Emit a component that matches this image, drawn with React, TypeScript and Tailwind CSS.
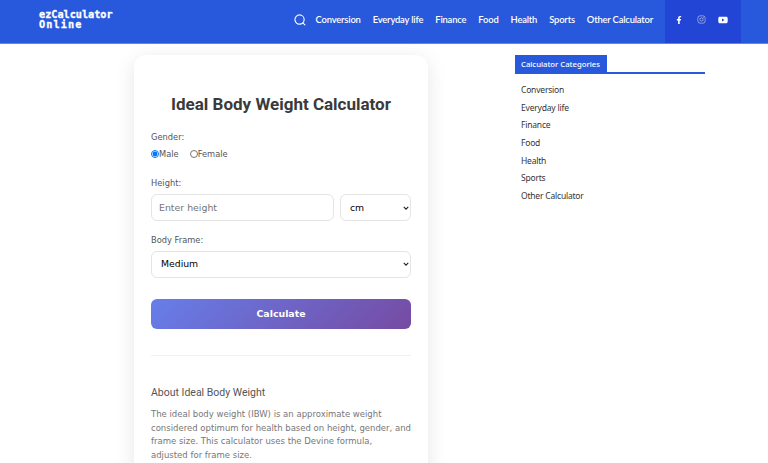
import { FaFacebookF, FaInstagram, FaYoutube } from "react-icons/fa";

const navItems = ["Conversion", "Everyday life", "Finance", "Food", "Health", "Sports", "Other Calculator"];

const Chevron = () => (
  <svg viewBox="0 0 8 5" className="absolute right-[2px] top-1/2 -translate-y-1/2 w-[6px] h-[4px] pointer-events-none text-[#222]">
    <path d="M1 1l3 3 3-3" fill="none" stroke="currentColor" strokeWidth="1.5" />
  </svg>
);

const Header = () => {
  return (
    <header className="h-[44px] bg-[#2859dc] border-b border-[#5d86ea] flex items-center pl-[39px] pr-[27px]">
      <a className="block font-['DejaVu_Sans_Mono',monospace] font-bold text-[10.2px] leading-[10px] text-white w-[120px] pb-[3px] [-webkit-text-stroke:0.3px_white]">
        ezCalculator<br /><span className="tracking-[1.1px]">Online</span>
      </a>
      <nav className="ml-auto flex items-center h-full font-['Lato',sans-serif] font-semibold text-[9.4px] tracking-[-0.17px] text-white">
        <svg viewBox="0 0 13 13" className="w-[12px] h-[12px] mr-[10px] mb-[4px]" fill="none" stroke="currentColor" strokeWidth="1.2">
          <circle cx="6" cy="6" r="5" />
          <path d="M9.6 9.6l2.2 2.2" strokeLinecap="round" />
        </svg>
        <div className="flex gap-3 pb-[3px]">
          {navItems.map((item) => (
            <a key={item}>{item}</a>
          ))}
        </div>
        <div className="ml-3 w-[76px] h-full bg-[#2245d6] flex items-center pl-[3px] pb-[4px]">
          <span className="w-[22px] flex justify-center"><FaFacebookF size={8} /></span>
          <span className="w-[22px] flex justify-center"><FaInstagram size={9} className="opacity-60" /></span>
          <span className="w-[22px] flex justify-center"><FaYoutube size={10} /></span>
        </div>
      </nav>
    </header>
  );
};

const Calculator = () => {
  return (
    <div className="w-[294px] bg-white rounded-xl shadow-[0_4px_20px_rgba(0,0,0,0.1)] px-[17px] pt-[39px] pb-8 font-['DejaVu_Sans',sans-serif]">
      <h1 className="font-['Roboto',sans-serif] font-bold text-[17px] leading-[20px] text-[#3a3a3a] text-center mb-[16px]">
        Ideal Body Weight Calculator
      </h1>

      <div className="text-[8.3px] text-[#555] mb-[15px]">
        <label className="block leading-[14px] mb-[3px]">Gender:</label>
        <div className="flex items-center gap-[11px] h-[14px]">
          <label className="flex items-center">
            <input type="radio" name="gender" defaultChecked className="m-0 w-[8px] h-[8px]" />
            Male
          </label>
          <label className="flex items-center">
            <input type="radio" name="gender" className="m-0 w-[8px] h-[8px]" />
            Female
          </label>
        </div>
      </div>

      <div className="mb-[12px]">
        <label className="block text-[8.3px] leading-[14px] text-[#555] mb-[4px]">Height:</label>
        <div className="flex gap-[6px]">
          <input
            placeholder="Enter height"
            className="w-[183px] h-[27px] px-[7px] border border-[#e4e4e4] rounded-md text-[9.4px] text-black placeholder:text-[#757575]"
          />
          <div className="relative w-[71px]">
            <select className="appearance-none w-full h-[27px] pl-[9px] border border-[#e4e4e4] rounded-md bg-white text-[9.3px] text-black">
              <option>cm</option>
              <option>in</option>
            </select>
            <Chevron />
          </div>
        </div>
      </div>

      <div className="mb-[21px]">
        <label className="block text-[8.3px] leading-[14px] text-[#555] mb-[3px]">Body Frame:</label>
        <div className="relative">
          <select className="appearance-none w-full h-[27px] pl-[9px] border border-[#e4e4e4] rounded-md bg-white text-[9.3px] text-black">
            <option>Medium</option>
            <option>Small</option>
            <option>Large</option>
          </select>
          <Chevron />
        </div>
      </div>

      <button className="w-full h-[30px] rounded-md bg-[linear-gradient(135deg,#667eea,#764ba2)] text-white font-bold text-[9.4px]">
        Calculate
      </button>

      <div className="border-t border-[#f0f0f0] mt-[26px] pt-[29px]">
        <h2 className="font-['Roboto',sans-serif] text-[10.5px] leading-[16px] text-[#555] mb-[7px]">About Ideal Body Weight</h2>
        <p className="text-[8.5px] leading-[13.6px] text-[#777] -mr-[1px]">
          The ideal body weight (IBW) is an approximate weight considered optimum for health based on height, gender, and frame size. This calculator uses the Devine formula,<br />adjusted for frame size.
        </p>
      </div>
    </div>
  );
};

const Sidebar = () => {
  return (
    <aside className="w-[190px] font-['Noto_Sans',sans-serif]">
      <div className="border-b-2 border-[#2859dc]">
        <div className="w-[92px] h-[17px] bg-[#2859dc] text-white text-[7.7px] font-medium leading-[18px] pl-[6px] whitespace-nowrap">
          Calculator Categories
        </div>
      </div>
      <ul className="mt-[7px] pl-[6px] text-[8.5px] tracking-[-0.2px] text-[#333]">
        {navItems.map((item) => (
          <li key={item} className="h-[17.7px] leading-[17.7px]">{item}</li>
        ))}
      </ul>
    </aside>
  );
};

export default function App() {
  return (
    <div className="h-[463px] overflow-hidden bg-white">
      <Header />
      <main className="flex pt-[11px] pl-[134px] gap-[87px]">
        <Calculator />
        <Sidebar />
      </main>
    </div>
  );
}
